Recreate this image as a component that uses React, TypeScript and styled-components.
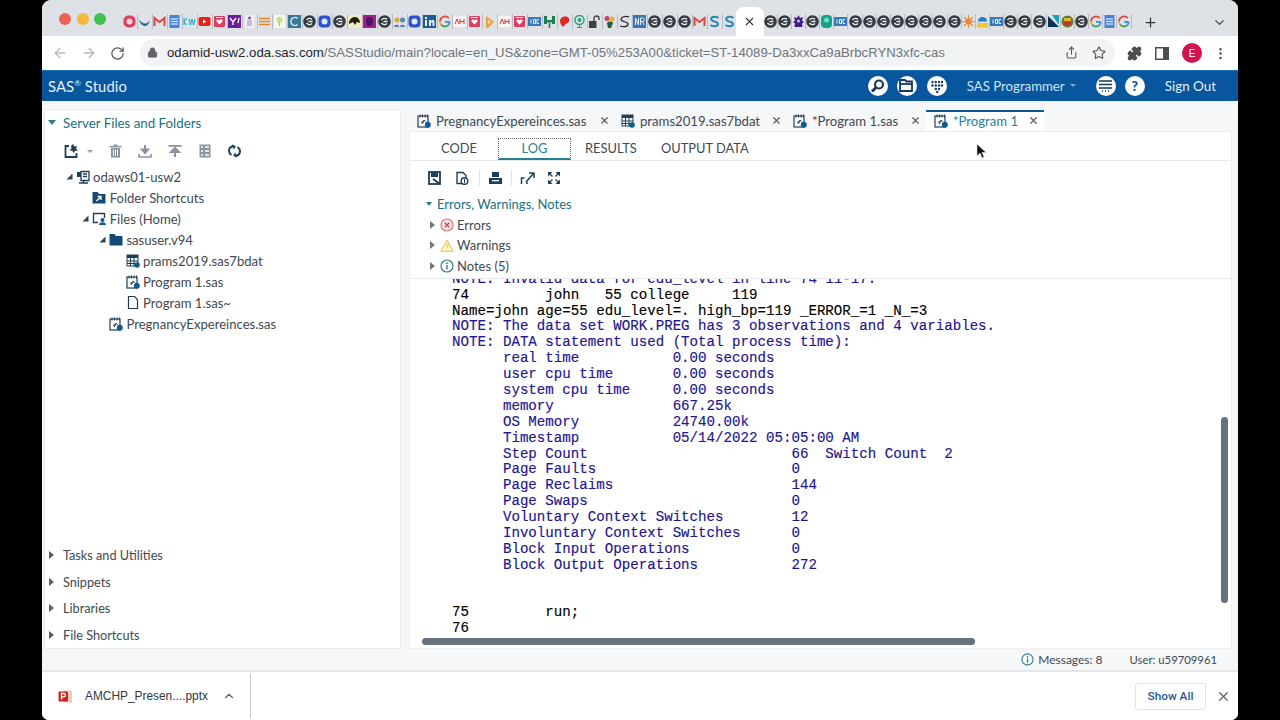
import React from 'react';
import styled, { createGlobalStyle } from 'styled-components';
import { ArrowLeft, ArrowRight, RotateCw, Lock, Share, Star, Puzzle, MoreVertical, Plus, ChevronDown, ChevronUp, X } from 'lucide-react';

const Global = createGlobalStyle`
  html, body { margin: 0; padding: 0; background: #000; overflow: hidden; }
  #root { width: 1280px; height: 720px; }
  * { box-sizing: border-box; }
`;

const Stage = styled.div`
  width: 1280px; height: 720px; background: #000; padding: 0 42px; position: relative;
`;
const Win = styled.div`
  width: 1196px; height: 720px; display: flex; flex-direction: column; overflow: hidden;
  border-radius: 9px 9px 7px 7px; background: #fff; font-family: Lato, "Open Sans", sans-serif; color: #3d4650;
`;
const TabStrip = styled.div`
  height: 36px; background: #dee1e6; display: flex; align-items: flex-end; flex: none;
`;
const Lights = styled.div`
  width: 80.5px; height: 36px; padding: 0 0 0 17px; display: flex; align-items: center; gap: 5.5px; flex: none;
`;
const Light = styled.span<{ $c: string }>`
  width: 12px; height: 12px; border-radius: 50%; background: ${p => p.$c}; margin-top: 1px;
`;
const FavGroup = styled.div`
  display: flex; height: 36px; align-items: center; padding-top: 7px; flex: none;
`;
const FavSlot = styled.div<{ $w: number }>`
  width: ${p => p.$w}px; height: 15px; display: flex; align-items: center; justify-content: center; flex: none;
  border-right: 1px solid #b9bcc2;
  svg { display: block; flex: none; }
`;
const ActiveChromeTab = styled.div`
  width: 28px; height: 29px; background: #fff; border-radius: 8px 8px 0 0; flex: none; display: flex; align-items: center; justify-content: center; color: #33363a; margin: 0 0 0 -2px;
`;
const NewTab = styled.div`
  width: 37px; display: flex; justify-content: center; height: 28px; align-items: center; color: #33363a; flex: none;
`;
const StripEnd = styled.div`
  flex: 1; display: flex; justify-content: flex-end; align-items: center; height: 28px; padding-right: 11px; color: #45484d;
`;
const AddressRow = styled.div`
  height: 34px; background: #fff; display: flex; align-items: center; flex: none; color: #5f6368;
`;
const NavIcons = styled.div`
  width: 98px; padding-left: 10px; display: flex; align-items: center; gap: 13px; flex: none;
`;
const NavBtn = styled.span<{ $dim?: boolean }>`
  display: flex; color: ${p => p.$dim ? '#b6b9bd' : '#55585c'};
`;
const Pill = styled.div`
  width: 975px; height: 27px; border-radius: 14px; background: #f1f3f4; display: flex; align-items: center; padding-left: 7px; flex: none; color: #5f6368;
  font-family: "Liberation Sans", Arial, sans-serif; font-size: 13.2px; margin-bottom: 1px;
`;
const Url = styled.div`
  margin-left: 9px; white-space: nowrap; color: #70757a; flex: 1;
  b { font-weight: normal; color: #24272a; }
`;
const PillEnd = styled.div`
  display: flex; align-items: center; gap: 14px; padding-right: 9px; color: #55585c;
`;
const RightTools = styled.div`
  display: flex; align-items: center; padding-left: 12px; gap: 13px; color: #4b4e52;
`;
const MoreBtn = styled.span`
  display: flex; margin-left: -2px;
`;
const Avatar = styled.div`
  width: 20px; height: 20px; border-radius: 50%; background: #cf1450; color: #fff; font-size: 10px; display: flex; align-items: center; justify-content: center; font-family: "Liberation Sans", sans-serif;
`;
const AppBar = styled.div`
  height: 31px; background: #07569e; color: #fff; display: flex; align-items: center; padding: 0 22px 1px 6px; flex: none; border-top: 1px solid #1d6fb3;
`;
const Brand = styled.div`
  font-size: 14.8px; flex: 1; letter-spacing: .1px; color: #e6f0f8;
  sup { font-size: 8px; line-height: 0; vertical-align: 6px; }
`;
const RoundBtn = styled.span<{ $mr?: number }>`
  width: 20px; height: 20px; display: flex; border-radius: 50%; background: #fff; align-items: center; justify-content: center; margin-right: ${p => p.$mr ?? 0}px; color: #07569e; font-weight: 900; font-size: 14px; flex: none;
`;
const Perspective = styled.div`
  font-size: 13.2px; color: #cfe3f3; margin-left: 20px; width: 129px; flex: none; display: flex; align-items: center;
`;
const Caret = styled.span`
  width: 0; height: 0; border: 3px solid transparent; border-top: 3.5px solid #7fa9ce; border-bottom: 0; margin-left: 5px;
`;
const SignOut = styled.div`
  font-size: 13.4px; color: #e6f0f8; margin-left: 20px;
`;
const Body = styled.div`
  flex: 1; min-height: 0; background: #f6f7f8; display: flex; flex-direction: column; padding: 8px 6px 0 2px;
`;
const Panels = styled.div`
  height: 540px; display: flex; gap: 8px; flex: none;
`;
const LeftPanel = styled.div`
  width: 357px; height: 540px; background: #fff; border: 1px solid #e9ebed; display: flex; flex-direction: column; flex: none;
`;
const PanelHead = styled.div`
  height: 27px; display: flex; align-items: center; padding: 0 0 2px 3px; color: #22707f; font-size: 13.3px; flex: none;
`;
const TriDown = styled.span<{ $c?: string }>`
  width: 0; height: 0; border: 4px solid transparent; border-top: 5px solid ${p => p.$c ?? '#2e7d8f'}; border-bottom: 0; margin-right: 7px; flex: none;
`;
const SmallTriDown = styled.span`
  width: 0; height: 0; border: 3.5px solid transparent; border-top: 4px solid #2e7d8f; border-bottom: 0; margin-right: 5px; flex: none;
`;
const TreeTools = styled.div`
  height: 28px; display: flex; align-items: center; padding-left: 18px; flex: none;
`;
const ToolLead = styled.div`
  width: 38px; display: flex; align-items: center; padding-left: 1px; gap: 3px;
`;
const ToolSlot = styled.div`
  width: 29.6px; display: flex; justify-content: center;
`;
const Tree = styled.div`
  margin-top: 1px; flex: 1; display: flex; flex-direction: column;
`;
const TreeRow = styled.div<{ $level: number }>`
  height: 21px; display: flex; align-items: center; padding-left: ${p => 18 + p.$level * 16.7}px; font-size: 13.1px; color: #3f4952; white-space: nowrap; flex: none;
`;
const Arrow = styled.span`
  width: 12px; display: flex; justify-content: center; flex: none;
`;
const IconSlot = styled.span`
  width: 15px; margin-right: 3px; display: flex; justify-content: center; flex: none;
`;
const Accordion = styled.div`
  flex: none; padding: 0 0 0 4px; display: flex; flex-direction: column;
`;
const AccRow = styled.div`
  height: 26.5px; display: flex; align-items: center; font-size: 12.7px; color: #3f4952;
`;
const TriRight = styled.span`
  width: 0; height: 0; border: 4px solid transparent; border-left: 5px solid #5a6068; border-right: 0; margin-right: 9px; flex: none;
`;
const RightCol = styled.div`
  flex: 1; height: 540px; display: flex; flex-direction: column; min-width: 0;
`;
const FileTabs = styled.div`
  height: 22px; display: flex; align-items: flex-end; padding-left: 2px; flex: none;
`;
const FileTab = styled.div<{ $w: number; $active?: boolean }>`
  width: ${p => p.$w}px; height: 21px; display: flex; align-items: center; padding-left: ${p => p.$active ? 8 : 6}px; font-size: 13.15px; flex: none; white-space: nowrap;
  background: ${p => p.$active ? '#fff' : 'transparent'};
  color: ${p => p.$active ? '#2b7f97' : '#3f4952'};
  box-shadow: ${p => p.$active ? 'inset 0 2px 0 #0a5a8e' : 'none'};
`;
const TabLabel = styled.span`
  margin-left: 5px; flex: 1;
`;
const TabClose = styled.span`
  display: flex; color: #555c63; margin-right: 5px;
`;
const Editor = styled.div`
  flex: 1; min-height: 0; background: #fff; border: 1px solid #eceef0; position: relative; display: flex; flex-direction: column;
`;
const SubTabs = styled.div`
  height: 29px; display: flex; border-bottom: 1px solid #e6e8ea; padding: 6px 0 0 31px; align-items: stretch; flex: none; font-size: 12.85px;
`;
const SubTab = styled.div<{ $w: number; $active?: boolean }>`
  width: ${p => p.$w}px; display: flex; align-items: center; justify-content: flex-start; padding-bottom: 2px;
  color: ${p => p.$active ? '#2b7f97' : '#3f4952'};
  ${p => p.$active ? 'justify-content:center; border: 1px dotted #666; border-bottom: 2px solid #2a7d93;' : ''}
`;
const LogTools = styled.div`
  height: 34px; display: flex; align-items: center; padding-left: 15px; flex: none;
`;
const LogTool = styled.div<{ $w: number }>`
  width: ${p => p.$w}px; display: flex; justify-content: center;
`;
const Sep = styled.span`
  width: 1px; height: 16px; background: #dfe1e3; flex: none;
`;
const MsgHead = styled.div`
  height: 19.5px; display: flex; align-items: center; padding: 0 0 1px 16px; color: #22707f; font-size: 13px; flex: none;
`;
const MsgRow = styled.div`
  height: 20.6px; display: flex; align-items: center; padding-left: 20px; font-size: 13px; color: #3f4952; flex: none;
  svg { flex: none; }
`;
const TriOutline = styled.span`
  width: 0; height: 0; border: 4px solid transparent; border-left: 5px solid #777; border-right: 0; margin-right: 4px; flex: none;
`;
const MsgIcon = styled.span`
  width: 15px; margin-right: 3px; display: flex; justify-content: center;
`;
const LogView = styled.div`
  height: 356px; margin-top: 2px; border-top: 1px solid #e8eaec; overflow: hidden; padding-left: 42px; flex: none;
`;
const LogPre = styled.div`
  margin-top: -7.5px; font-family: "Liberation Mono", "Courier New", monospace; font-size: 14.15px; line-height: 15.9px; white-space: pre;
`;
const LogLine = styled.div<{ $note?: boolean }>`
  height: 15.9px; color: ${p => p.$note ? '#221391' : '#000'}; -webkit-text-stroke: .15px currentColor;
`;
const VScroll = styled.div`
  position: absolute; left: 811px; top: 285px; width: 7px; height: 186px; border-radius: 4px; background: #67717f;
`;
const HScroll = styled.div`
  position: absolute; left: 12px; top: 506px; width: 553px; height: 7px; border-radius: 4px; background: #67717f;
`;
const StatusBar = styled.div`
  height: 18px; margin-top: 1px; display: flex; justify-content: flex-end; align-items: center; padding-right: 15px; font-size: 12px; color: #3f4952; flex: none;
`;
const Msg = styled.span`
  display: flex; align-items: center; gap: 4px; margin-right: 27px;
`;
const UserLabel = styled.span`
  font-size: 11.3px;
`;
const Downloads = styled.div`
  height: 50px; background: #fff; border-top: 2px solid #e4e6e8; display: flex; align-items: center; flex: none;
`;
const DlItem = styled.div`
  width: 209px; height: 44px; display: flex; align-items: center; padding-left: 16px; border-right: 1px solid #c8cacc; font-family: "Liberation Sans", sans-serif; font-size: 11.9px; color: #33373b; flex: none;
`;
const DlName = styled.span`
  margin-left: 12px; flex: 1;
`;
const DlCaret = styled.span`
  display: flex; margin-right: 14px; color: #5f6368;
`;
const DlSpacer = styled.div`
  flex: 1;
`;
const ShowAll = styled.div`
  width: 71px; height: 27px; border: 1px solid #e0e2e5; border-radius: 3px; display: flex; align-items: center; justify-content: center; color: #1a5c94; font-family: Roboto, sans-serif; font-weight: 500; font-size: 11.8px; margin-right: 10px;
`;
const DlClose = styled.span`
  display: flex; color: #5f6368; margin-right: 7px;
`;
const Cursor = styled.svg`
  position: absolute; left: 975px; top: 143px;
`;

const ProgramIcon = () => (
  <svg width="14" height="14" viewBox="0 0 14 14">
    <rect x="1" y="2" width="10" height="11" fill="#fff" stroke="#1f3f58" strokeWidth="1.2" />
    <path d="M3 .5v3M5.5 .5v3M8 .5v3M10.5 .5v3" stroke="#1f3f58" />
    <path d="M5 10l2-4M7 6l1.5 2M4 8h3" stroke="#1f3f58" fill="none" />
    <circle cx="10.8" cy="10.8" r="3" fill="#0d5c8f" />
  </svg>
);
const DataIcon = () => (
  <svg width="14" height="14" viewBox="0 0 14 14">
    <rect x="1" y="1" width="11" height="11" fill="#fff" stroke="#1f3f58" />
    <rect x="1" y="1" width="11" height="3" fill="#1f3f58" />
    <path d="M1 7h11M1 9.5h11M4.5 4v8M8 4v8" stroke="#1f3f58" />
    <circle cx="11" cy="11" r="2.8" fill="#0d5c8f" />
  </svg>
);
const PageIcon = () => (
  <svg width="14" height="15" viewBox="0 0 14 15">
    <path d="M2.5 1.5h6l3 3v9h-9z" fill="#fff" stroke="#23384a" strokeWidth="1.2" />
  </svg>
);
const ServerIcon = () => (
  <svg width="14" height="14" viewBox="0 0 14 14">
    <path d="M1 2h8v5H1z" fill="#1f3f58" />
    <path d="M5 1.5h8v9H5z" fill="#fff" stroke="#1f3f58" strokeWidth="1.3" />
    <path d="M7 4h4M7 6.5h4M3 13h9M7.5 10.5V13" stroke="#1f3f58" strokeWidth="1.3" />
  </svg>
);
const ShortcutIcon = () => (
  <svg width="14" height="13" viewBox="0 0 14 13">
    <path d="M0.5 1h5l1.5 2h6.5v9.5H.5z" fill="#124a74" />
    <path d="M4.5 10l4-4M5.5 5.5h3.5V9" stroke="#fff" strokeWidth="1.3" fill="none" />
  </svg>
);
const HomeIcon = () => (
  <svg width="15" height="14" viewBox="0 0 15 14">
    <path d="M6 10.5H1.5v-9h11V6" fill="none" stroke="#1f3f58" strokeWidth="1.4" />
    <circle cx="10.5" cy="8" r="2" fill="#0d5c8f" />
    <path d="M7 13c.3-2 1.5-2.7 3.5-2.7S13.8 11 14 13z" fill="#0d5c8f" />
  </svg>
);
const FolderIcon = () => (
  <svg width="14" height="13" viewBox="0 0 14 13">
    <path d="M.5 1h5l1.5 2h6.5v9.5H.5z" fill="#124a74" />
  </svg>
);
const NewIcon = () => (
  <svg width="15" height="14" viewBox="0 0 15 14">
    <path d="M5 2H1.5v11h11V9" fill="none" stroke="#1f3f58" strokeWidth="1.8" />
    <path d="M9 0l1.3 2.5L13 2l-1 2.5L14 6.5l-2.7.2L9.5 9 8.3 6.7 5.5 6.5 7.5 4.5 7 2z" fill="#1f3f58" />
  </svg>
);
const TrashIcon = () => (
  <svg width="13" height="14" viewBox="0 0 13 14" fill="#8895a0">
    <rect x="0.5" y="2" width="12" height="1.4" /><rect x="4.5" y="0.5" width="4" height="1.5" />
    <path d="M2 4h9v9.5H2z" /><path d="M4.5 5.5v6.5M6.5 5.5v6.5M8.5 5.5v6.5" stroke="#fff" />
  </svg>
);
const DownloadIcon = () => (
  <svg width="14" height="14" viewBox="0 0 14 14">
    <path d="M7 1v7M4 5.5l3 3.5 3-3.5z" stroke="#8895a0" strokeWidth="2" fill="#8895a0" />
    <path d="M1 10v3h12v-3" fill="none" stroke="#8895a0" strokeWidth="1.6" />
  </svg>
);
const UploadIcon = () => (
  <svg width="14" height="14" viewBox="0 0 14 14">
    <rect x="0.5" y="1" width="13" height="1.8" fill="#8895a0" />
    <path d="M7 13V7M3 8l4-4 4 4z" stroke="#8895a0" strokeWidth="2" fill="#8895a0" />
  </svg>
);
const PropsIcon = () => (
  <svg width="12" height="14" viewBox="0 0 12 14">
    <rect x="0.5" y="0.5" width="11" height="13" fill="#8895a0" />
    <path d="M2 3h2M6 3h4M2 7h2M6 7h4M2 11h2M6 11h4" stroke="#fff" strokeWidth="1.3" />
  </svg>
);
const RefreshIcon = () => (
  <svg width="15" height="14" viewBox="0 0 15 14" fill="none" stroke="#1f3f58" strokeWidth="2">
    <path d="M7 2.5C4 2 2 4 2 6.500 2 8.500 3 10 4.500 11" />
    <path d="M8 11.500c3 .5 5-1.500 5-4 0-2-1-3.500-2.500-4.500" />
    <path d="M5 1l3 1.500-1.500 2.500M10 13L7 11.500 8.500 9" strokeWidth="1.3" />
  </svg>
);
const SaveLogIcon = () => (
  <svg width="14" height="14" viewBox="0 0 14 14">
    <rect x="1" y="1" width="11" height="12" fill="#fff" stroke="#1f3f58" strokeWidth="1.8" />
    <path d="M3 1.500h7V6H3z" fill="#1f3f58" />
    <path d="M5 8l7 5" stroke="#1f3f58" strokeWidth="2" />
  </svg>
);
const SaveAsIcon = () => (
  <svg width="14" height="14" viewBox="0 0 14 14">
    <path d="M2 1.500h6l3 3v8H2z" fill="#fff" stroke="#1f3f58" strokeWidth="1.4" />
    <circle cx="9.500" cy="10" r="3.300" fill="#fff" stroke="#1f3f58" strokeWidth="1.4" />
    <path d="M9.500 8v4" stroke="#1f3f58" />
  </svg>
);
const PrintIcon = () => (
  <svg width="15" height="14" viewBox="0 0 15 14">
    <path d="M4 1h7v5H4z" fill="#1f3f58" />
    <rect x="1" y="7" width="13" height="6" fill="#1f3f58" />
    <rect x="4" y="9" width="7" height="1.300" fill="#fff" />
  </svg>
);
const PopIcon = () => (
  <svg width="15" height="14" viewBox="0 0 15 14" fill="none" stroke="#1f3f58" strokeWidth="1.500">
    <path d="M1.500 13V7h3" />
    <path d="M6 11l7-8M9 2h5v5" />
    <path d="M7 13v-2" />
  </svg>
);
const ExpandIcon = () => (
  <svg width="14" height="14" viewBox="0 0 14 14" fill="#1f3f58">
    <path d="M1 1h4.500L1 5.500zM13 1H8.500L13 5.500zM1 13h4.500L1 8.500zM13 13H8.500L13 8.500z" />
    <path d="M1.500 1.500l4 4M12.500 1.500l-4 4M1.500 12.500l4-4M12.500 12.500l-4-4" stroke="#1f3f58" strokeWidth="1.300" />
  </svg>
);
const ErrIcon = () => (
  <svg width="14" height="14" viewBox="0 0 14 14">
    <circle cx="7" cy="7" r="6" fill="#f9e3e3" stroke="#d77a7c" strokeWidth="1.200" />
    <path d="M4.800 4.800l4.400 4.400M9.200 4.800l-4.400 4.400" stroke="#c84a4e" strokeWidth="1.300" />
  </svg>
);
const WarnIcon = () => (
  <svg width="14" height="13" viewBox="0 0 14 13">
    <path d="M7 1l6.300 11.300H.7z" fill="#fdf3c8" stroke="#e6c14f" />
    <path d="M7 4.500V9" stroke="#e6c14f" />
  </svg>
);
const InfoIcon = ({ c = '#2c7a8e', s = 14 }: { c?: string; s?: number }) => (
  <svg width={s} height={s} viewBox="0 0 14 14">
    <circle cx="7" cy="7" r="6" fill="#fff" stroke={c} strokeWidth="1.200" />
    <circle cx="7" cy="4.200" r=".9" fill={c} />
    <path d="M7 6v4.500" stroke={c} strokeWidth="1.400" />
  </svg>
);
const SearchRound = () => (
  <svg width="14" height="14" viewBox="0 0 14 14" fill="none" stroke="#16395a" strokeWidth="2.200">
    <circle cx="8" cy="5.500" r="4" /><path d="M5 8.500l-4 4" strokeWidth="2.800" />
  </svg>
);
const FolderRound = () => (
  <svg width="15" height="13" viewBox="0 0 15 13">
    <path d="M1 1h5l1.500 1.500H13V12H1z" fill="none" stroke="#16395a" strokeWidth="1.800" />
    <path d="M1 5h12" stroke="#16395a" strokeWidth="1.800" />
  </svg>
);
const DotsRound = () => (
  <svg width="14" height="14" viewBox="0 0 14 14" fill="#16395a">
    {[[2.500,3],[5.800,3],[9,3],[12,3],[2.500,6.500],[5.800,6.500],[9,6.500],[12,6.500],[5.800,10],[9,10],[7.300,13]].map(([x, y], i) => <circle key={i} cx={x} cy={y} r="1.200" />)}
  </svg>
);
const MenuRound = () => (
  <svg width="15" height="13" viewBox="0 0 15 13">
    <path d="M1 2h13M1 5.500h13M1 9h13" stroke="#16395a" strokeWidth="1.500" />
    <path d="M4 12h1M7 12h1M10 12h1" stroke="#16395a" strokeWidth="1.300" />
  </svg>
);
const PptIcon = () => (
  <svg width="15" height="15" viewBox="0 0 15 15">
    <rect x="5" y="1.500" width="9" height="12" rx="1" fill="#f0c8bc" />
    <rect x="0.500" y="2.500" width="9.500" height="10" rx="1" fill="#c9271c" />
    <path d="M3.500 10.500v-6h2.200a1.600 1.600 0 0 1 0 3.300H3.500" fill="none" stroke="#fff" strokeWidth="1.300" />
  </svg>
);

type Fav = 'ring' | 'swoosh' | 'gmail' | 'doc' | 'kw' | 'yt' | 'pocket' | 'yahoo' | 'lilac' | 'lines' | 'pale' | 'tealc' | 'e' | 'bluering' | 'pac' | 'purple' | 'photo' | 'in' | 'g' | 'adc' | 'play' | 'idc' | 'h' | 'redblob' | 'tree' | 'lock' | 'plant' | 'wave' | 'nr' | 's' | 'flower' | 'teal' | 'sun' | 'cap' | 'navy' | 'crest';

const FavIcon = ({ k }: { k: Fav }) => {
  const box = { width: 13, height: 13, viewBox: '0 0 13 13' };
  switch (k) {
    case 'ring': return <svg {...box}><rect x=".5" y=".5" width="12" height="12" rx="5" fill="#d9415c" /><circle cx="6.500" cy="6.500" r="3" fill="#f3d5da" /></svg>;
    case 'swoosh': return <svg {...box}><path d="M1 4c1 5 4 7 6 7s4-2 5-6c-2 3-4 4-6 3.500S2 6 1 4z" fill="#1b6f8a" /></svg>;
    case 'gmail': return <svg {...box}><path d="M1.500 11V3l5 4 5-4v8" fill="none" stroke="#d9483b" strokeWidth="2" /></svg>;
    case 'doc': return <svg {...box}><rect x="1.500" width="10" height="13" fill="#4a82d8" /><path d="M3 4h7M3 6.500h7M3 9h7" stroke="#fff" /></svg>;
    case 'kw': return <svg {...box}><path d="M1 3v7M1 7l3-4M1 7l3 3M6 4l1.500 6L9 4l1.500 6L12 4" stroke="#1aa6c8" fill="none" /></svg>;
    case 'yt': return <svg {...box}><rect x=".5" y="2" width="12" height="9" rx="2" fill="#e62117" /><path d="M5 4.500v4l3.500-2z" fill="#fff" /></svg>;
    case 'pocket': return <svg {...box}><rect x="1" y="1" width="11" height="11" rx="1" fill="#df3d5d" /><path d="M3 2.500h7" stroke="#fff" /><path d="M6.500 9.500L3.500 6.500a1.500 1.500 0 0 1 3-1 1.500 1.500 0 0 1 3 1z" fill="#fff" /></svg>;
    case 'yahoo': return <svg {...box}><rect width="13" height="13" fill="#6a1e9c" /><path d="M2 3l3 4 3-4M5 7v3M11 3l-1 5" stroke="#fff" strokeWidth="1.300" fill="none" /></svg>;
    case 'lilac': return <svg {...box}><rect x="2" width="9" height="13" fill="#f2eef5" /><circle cx="6.500" cy="3" r="1.500" fill="#7a4fa0" /><path d="M4 6h5M4 8h5M4 10h5" stroke="#a18ab8" /></svg>;
    case 'lines': return <svg {...box}><path d="M1 3.500h11M1 6.500h11M1 9.500h11" stroke="#ea8a24" strokeWidth="1.500" /></svg>;
    case 'pale': return <svg {...box}><rect x="1" width="11" height="13" fill="#f6f8ea" /><circle cx="6.500" cy="5" r="3" fill="#c8dc8c" /><path d="M6.500 7v4" stroke="#a7bf6a" /></svg>;
    case 'tealc': return <svg {...box}><rect width="13" height="13" fill="#3a7a96" /><path d="M9.500 3.500a4 4 0 1 0 0 6" fill="none" stroke="#e3eef2" strokeWidth="1.500" /></svg>;
    case 'e': return <svg {...box}><circle cx="6.500" cy="6.500" r="6.300" fill="#333b42" /><path d="M3.500 5c1.500-2 4-2 5.500-.5M9.500 6.500H5.500M3.500 8c1.500 2 4 2 5.500.5" stroke="#eee" strokeWidth="1.300" fill="none" /></svg>;
    case 'bluering': return <svg {...box}><rect x=".5" y=".5" width="12" height="12" rx="4" fill="#2c55c9" /><circle cx="6.500" cy="6.500" r="3" fill="#e2e8f8" /></svg>;
    case 'pac': return <svg {...box}><rect width="13" height="13" fill="#f3ecc3" /><path d="M1 9c0-5 3-7 6-7s5 3 5 6l-3-1-2 3-2-3z" fill="#24210f" /></svg>;
    case 'purple': return <svg {...box}><rect width="13" height="13" fill="#a31f8e" /><rect x="3" y="2" width="7" height="9" rx="3" fill="#4e1366" /></svg>;
    case 'photo': return <svg {...box}><circle cx="4" cy="5" r="2.500" fill="#e3a72f" /><circle cx="9.500" cy="5" r="2.500" fill="#4a8bb8" /><path d="M1 12c0-3 5-3 5 0M7 12c0-3 5-3 5 0" fill="#5d7ea0" /></svg>;
    case 'in': return <svg {...box}><rect width="13" height="13" fill="#1b5d92" /><rect x="2" y="5" width="2" height="6" fill="#e8f0f6" /><rect x="2" y="2" width="2" height="2" fill="#e8f0f6" /><path d="M6 11V5h2v1c1-1.500 3.500-1.500 3.500 1v4h-2V8c0-1-1.500-1-1.500 0v3z" fill="#e8f0f6" /></svg>;
    case 'g': return <svg {...box}><path d="M10.800 3.200A5 5 0 0 0 2 6.500" fill="none" stroke="#e2453a" strokeWidth="1.800" /><path d="M2 6.500a5 5 0 0 0 1 3" fill="none" stroke="#f2b51f" strokeWidth="1.800" /><path d="M3 9.500a5 5 0 0 0 8 0" fill="none" stroke="#3aa652" strokeWidth="1.800" /><path d="M11.500 6.800H7M11 9.500c.5-1 .5-2 .5-2.700" fill="none" stroke="#4285f4" strokeWidth="1.800" /></svg>;
    case 'adc': return <svg {...box}><rect x="0" y="1" width="13" height="11" fill="#fbf3f2" /><path d="M2 9l2-5 2 5M7 9V4M7 6.500h4M11 4v5" stroke="#d23b33" fill="none" /></svg>;
    case 'play': return <svg {...box}><path d="M3 1l8 6-6 6H3z" fill="#e8a33a" /><path d="M5 4.500l3 2.500-3 2.500z" fill="#f9dca8" /></svg>;
    case 'idc': return <svg {...box}><rect y="2" width="13" height="9" fill="#3a78bc" /><path d="M3 4.500v4M5.500 4.500v4h2v-4zM11 4.500H9v4h2" stroke="#e8f0f8" fill="none" /></svg>;
    case 'h': return <svg {...box}><path d="M1 1h3v4h5V1h3v8H9V7.500H4V9H1z" fill="#1f7d4d" /><path d="M6.500 8v5" stroke="#1f7d4d" strokeWidth="1.500" /></svg>;
    case 'redblob': return <svg {...box}><path d="M2 6c0-3 3-5 6-4.500s4 3 3 5-3 1.500-4 3-2 3-3 1.500-2-3-2-5z" fill="#dc2a26" /></svg>;
    case 'tree': return <svg {...box}><circle cx="6.500" cy="5" r="4.500" fill="none" stroke="#2ca27c" strokeWidth="1.500" /><circle cx="6.500" cy="5" r="2" fill="#2ca27c" /><path d="M6.500 9v4M4 12.500h5" stroke="#2ca27c" /></svg>;
    case 'lock': return <svg {...box}><rect x="1" y="6" width="7.500" height="7" fill="#3e4247" /><path d="M6 6V3.500a2.500 2.500 0 0 1 5 0V5" fill="none" stroke="#3e4247" strokeWidth="1.400" /></svg>;
    case 'plant': return <svg {...box}><circle cx="4" cy="3.500" r="2.500" fill="#c73f6d" /><circle cx="9" cy="4" r="2.500" fill="#e0b13a" /><path d="M4 8c1-2 5-2 6 0l-2 5H5z" fill="#245f3c" /></svg>;
    case 'wave': return <svg {...box}><path d="M11 2C7 .5 3 2 3 4.500s7 2 7 4.500-4 3.500-8 2" fill="none" stroke="#23282c" strokeWidth="1.300" /></svg>;
    case 'nr': return <svg {...box}><rect width="13" height="13" fill="#3a76b4" /><path d="M2.500 10V3l3 7V3M7.500 10V3h2a1.500 1.500 0 0 1 0 3.500h-2M9.500 6.500l1.500 3.500" stroke="#e4eef7" fill="none" /></svg>;
    case 's': return <svg {...box}><path d="M10.500 3C8.500.8 3 1.500 3.200 4.200 3.400 7.200 10 6 10 9c0 2.500-5 3-7.500 1" fill="none" stroke="#1f89b4" strokeWidth="2" /></svg>;
    case 'flower': return <svg {...box}><path d="M6.500 0l1.500 3 3-1-1 3.500 2 1.500-2 1.500.5 3.500h-8l.5-3.500L1 7l2-1.500L2 2l3 1z" fill="#3e1f82" /><circle cx="6.500" cy="6" r="1.500" fill="#d0b8e8" /></svg>;
    case 'teal': return <svg {...box}><rect x="1" y="0" width="11" height="13" rx="4" fill="#14a38a" /><circle cx="6.500" cy="5" r="2.500" fill="#7fd8c6" /></svg>;
    case 'sun': return <svg {...box}><circle cx="6.500" cy="6.500" r="3" fill="#ec6a1e" /><path d="M6.500 0v13M0 6.500h13M2 2l9 9M11 2l-9 9" stroke="#ec8a2e" strokeWidth="1.200" /></svg>;
    case 'cap': return <svg {...box}><path d="M2 6.500a4.500 4.500 0 0 1 9 0z" fill="#1d7dc0" /><path d="M1 8h11v4.500H1z" fill="#edc92e" /></svg>;
    case 'navy': return <svg {...box}><path d="M1 1l11 11H1z" fill="#0d3458" /><path d="M5 0h7v10z" fill="#17a0b8" /></svg>;
    case 'crest': return <svg {...box}><circle cx="6.500" cy="6.500" r="6" fill="#5d7c2f" /><rect x="3" y="3" width="7" height="3" fill="#e2b531" /><rect x="3" y="7" width="7" height="3" fill="#b43c28" /></svg>;
  }
};

const leftFavs: Fav[] = ['ring','swoosh','gmail','doc','kw','yt','pocket','yahoo','lilac','lines','pale','tealc','e','bluering','e','pac','purple','e','photo','bluering','in','g','adc','pocket','play','adc','pocket','idc','h','redblob','tree','lock','plant','wave','nr','e','e','e','gmail','s','s'];
const rightFavs: Fav[] = ['e','e','flower','e','teal','idc','e','e','e','e','e','e','e','e','sun','cap','idc','e','e','e','navy','crest','e','g','doc','g'];

const logLines: [string, boolean][] = [
  ['NOTE: Invalid data for edu_level in line 74 11-17.', true],
  ['74         john   55 college     119', false],
  ['Name=john age=55 edu_level=. high_bp=119 _ERROR_=1 _N_=3', false],
  ['NOTE: The data set WORK.PREG has 3 observations and 4 variables.', true],
  ['NOTE: DATA statement used (Total process time):', true],
  ['      real time           0.00 seconds', true],
  ['      user cpu time       0.00 seconds', true],
  ['      system cpu time     0.00 seconds', true],
  ['      memory              667.25k', true],
  ['      OS Memory           24740.00k', true],
  ['      Timestamp           05/14/2022 05:05:00 AM', true],
  ['      Step Count                        66  Switch Count  2', true],
  ['      Page Faults                       0', true],
  ['      Page Reclaims                     144', true],
  ['      Page Swaps                        0', true],
  ['      Voluntary Context Switches        12', true],
  ['      Involuntary Context Switches      0', true],
  ['      Block Input Operations            0', true],
  ['      Block Output Operations           272', true],
  [' ', false],
  [' ', false],
  ['75         run;', false],
  ['76', false],
];

const TreeTri = () => (
  <svg width="7" height="7" viewBox="0 0 7 7"><path d="M6.500 .5v6H.5z" fill="#3a4148" /></svg>
);

const App = () => (
  <Stage>
    <Global />
    <Win>
      <TabStrip>
        <Lights><Light $c="#ed5f57" /><Light $c="#f4b83f" /><Light $c="#3fc14e" /></Lights>
        <FavGroup>{leftFavs.map((k, i) => <FavSlot key={i} $w={15}><FavIcon k={k} /></FavSlot>)}</FavGroup>
        <ActiveChromeTab><X size={13} strokeWidth={2} /></ActiveChromeTab>
        <FavGroup>{rightFavs.map((k, i) => <FavSlot key={i} $w={14.17}><FavIcon k={k} /></FavSlot>)}</FavGroup>
        <NewTab><Plus size={15} strokeWidth={2} /></NewTab>
        <StripEnd><ChevronDown size={15} strokeWidth={2} /></StripEnd>
      </TabStrip>
      <AddressRow>
        <NavIcons>
          <NavBtn $dim><ArrowLeft size={16} /></NavBtn>
          <NavBtn $dim><ArrowRight size={16} /></NavBtn>
          <NavBtn><RotateCw size={15} /></NavBtn>
        </NavIcons>
        <Pill>
          <Lock size={11} fill="#5f6368" />
          <Url><b>odamid-usw2.oda.sas.com</b>/SASStudio/main?locale=en_US&amp;zone=GMT-05%253A00&amp;ticket=ST-14089-Da3xxCa9aBrbcRYN3xfc-cas</Url>
          <PillEnd><Share size={13} /><Star size={14} /></PillEnd>
        </Pill>
        <RightTools>
          <Puzzle size={15} fill="#4b4e52" />
          <svg width="14" height="13" viewBox="0 0 14 13"><rect x=".75" y=".75" width="12.500" height="11.500" fill="none" stroke="#4b4e52" strokeWidth="1.500" /><rect x="8" y="1" width="5" height="11" fill="#4b4e52" /></svg>
          <Avatar>E</Avatar>
          <MoreBtn><MoreVertical size={15} /></MoreBtn>
        </RightTools>
      </AddressRow>
      <AppBar>
        <Brand>SAS<sup>®</sup> Studio</Brand>
        <RoundBtn $mr={9}><SearchRound /></RoundBtn>
        <RoundBtn $mr={10}><FolderRound /></RoundBtn>
        <RoundBtn><DotsRound /></RoundBtn>
        <Perspective>SAS Programmer<Caret /></Perspective>
        <RoundBtn $mr={9}><MenuRound /></RoundBtn>
        <RoundBtn>?</RoundBtn>
        <SignOut>Sign Out</SignOut>
      </AppBar>
      <Body>
        <Panels>
          <LeftPanel>
            <PanelHead><TriDown />Server Files and Folders</PanelHead>
            <TreeTools>
              <ToolLead><NewIcon /><Caret /></ToolLead>
              <ToolSlot><TrashIcon /></ToolSlot>
              <ToolSlot><DownloadIcon /></ToolSlot>
              <ToolSlot><UploadIcon /></ToolSlot>
              <ToolSlot><PropsIcon /></ToolSlot>
              <ToolSlot><RefreshIcon /></ToolSlot>
            </TreeTools>
            <Tree>
              <TreeRow $level={0}><Arrow><TreeTri /></Arrow><IconSlot><ServerIcon /></IconSlot>odaws01-usw2</TreeRow>
              <TreeRow $level={1}><Arrow /><IconSlot><ShortcutIcon /></IconSlot>Folder Shortcuts</TreeRow>
              <TreeRow $level={1}><Arrow><TreeTri /></Arrow><IconSlot><HomeIcon /></IconSlot>Files (Home)</TreeRow>
              <TreeRow $level={2}><Arrow><TreeTri /></Arrow><IconSlot><FolderIcon /></IconSlot>sasuser.v94</TreeRow>
              <TreeRow $level={3}><Arrow /><IconSlot><DataIcon /></IconSlot>prams2019.sas7bdat</TreeRow>
              <TreeRow $level={3}><Arrow /><IconSlot><ProgramIcon /></IconSlot>Program 1.sas</TreeRow>
              <TreeRow $level={3}><Arrow /><IconSlot><PageIcon /></IconSlot>Program 1.sas~</TreeRow>
              <TreeRow $level={2}><Arrow /><IconSlot><ProgramIcon /></IconSlot>PregnancyExpereinces.sas</TreeRow>
            </Tree>
            <Accordion>
              <AccRow><TriRight />Tasks and Utilities</AccRow>
              <AccRow><TriRight />Snippets</AccRow>
              <AccRow><TriRight />Libraries</AccRow>
              <AccRow><TriRight />File Shortcuts</AccRow>
            </Accordion>
          </LeftPanel>
          <RightCol>
            <FileTabs>
              <FileTab $w={204}><ProgramIcon /><TabLabel>PregnancyExpereinces.sas</TabLabel><TabClose><X size={11} strokeWidth={2.500} /></TabClose></FileTab>
              <FileTab $w={172}><DataIcon /><TabLabel>prams2019.sas7bdat</TabLabel><TabClose><X size={11} strokeWidth={2.500} /></TabClose></FileTab>
              <FileTab $w={139}><ProgramIcon /><TabLabel>*Program 1.sas</TabLabel><TabClose><X size={11} strokeWidth={2.500} /></TabClose></FileTab>
              <FileTab $w={118} $active><ProgramIcon /><TabLabel>*Program 1</TabLabel><TabClose><X size={11} strokeWidth={2.500} /></TabClose></FileTab>
            </FileTabs>
            <Editor>
              <SubTabs>
                <SubTab $w={57}>CODE</SubTab>
                <SubTab $w={73} $active>LOG</SubTab>
                <SubTab $w={14} />
                <SubTab $w={76}>RESULTS</SubTab>
                <SubTab $w={100}>OUTPUT DATA</SubTab>
              </SubTabs>
              <LogTools>
                <LogTool $w={20}><SaveLogIcon /></LogTool>
                <LogTool $w={34}><SaveAsIcon /></LogTool>
                <Sep />
                <LogTool $w={31}><PrintIcon /></LogTool>
                <Sep />
                <LogTool $w={31}><PopIcon /></LogTool>
                <LogTool $w={22}><ExpandIcon /></LogTool>
              </LogTools>
              <MsgHead><SmallTriDown />Errors, Warnings, Notes</MsgHead>
              <MsgRow><TriOutline /><MsgIcon><ErrIcon /></MsgIcon>Errors</MsgRow>
              <MsgRow><TriOutline /><MsgIcon><WarnIcon /></MsgIcon>Warnings</MsgRow>
              <MsgRow><TriOutline /><MsgIcon><InfoIcon /></MsgIcon>Notes (5)</MsgRow>
              <LogView>
                <LogPre>{logLines.map(([t, n], i) => <LogLine key={i} $note={n}>{t}</LogLine>)}</LogPre>
              </LogView>
              <VScroll />
              <HScroll />
            </Editor>
          </RightCol>
        </Panels>
        <StatusBar>
          <Msg><InfoIcon s={13} />Messages: 8</Msg><UserLabel>User: u59709961</UserLabel>
        </StatusBar>
      </Body>
      <Downloads>
        <DlItem><PptIcon /><DlName>AMCHP_Presen....pptx</DlName><DlCaret><ChevronUp size={14} /></DlCaret></DlItem>
        <DlSpacer />
        <ShowAll>Show All</ShowAll>
        <DlClose><X size={15} /></DlClose>
      </Downloads>
    </Win>
    <Cursor width="13" height="17" viewBox="0 0 13 17">
      <path d="M2 1v12l3-3 2 5 2-1-2-4.500h4z" fill="#111" stroke="#ddd" strokeWidth=".6" />
    </Cursor>
  </Stage>
);

export default App;
